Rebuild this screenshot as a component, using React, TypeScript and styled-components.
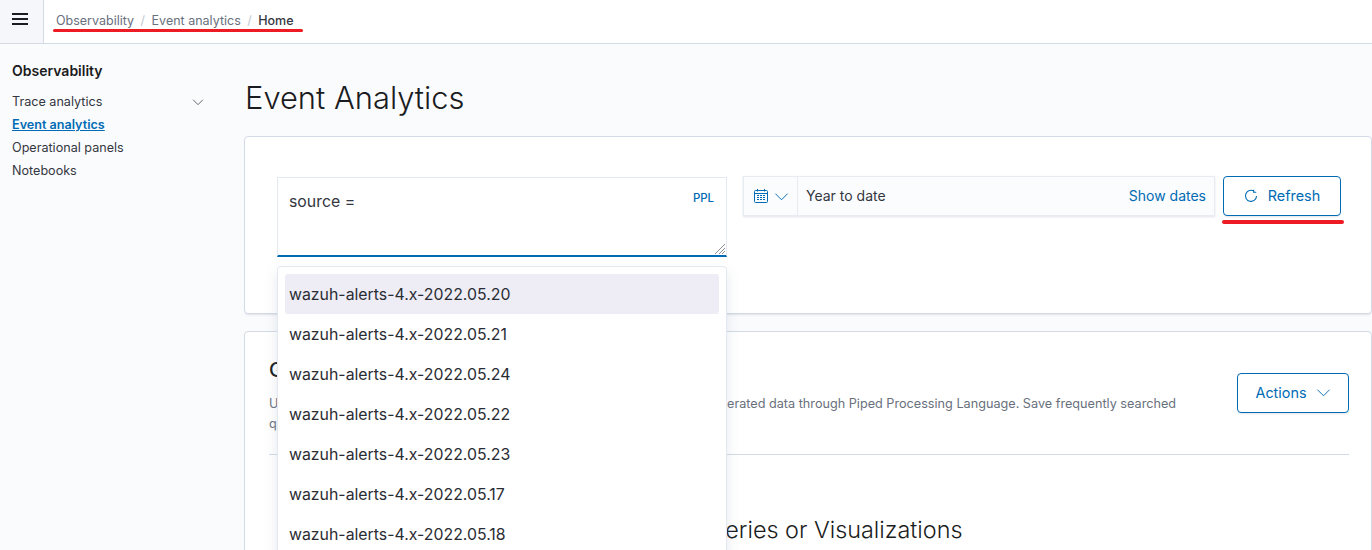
import React from 'react';
import styled, { createGlobalStyle } from 'styled-components';

const GlobalStyle = createGlobalStyle`
  html, body {
    margin: 0;
    padding: 0;
    height: 550px;
    overflow: hidden;
    background: #f5f7fa;
  }
  * { box-sizing: border-box; }
`;

const Page = styled.div`
  position: relative;
  width: 1372px;
  height: 550px;
  overflow: hidden;
  font-family: Inter, 'Liberation Sans', sans-serif;
  color: #343741;
  background: #fafbfd;
`;

const Header = styled.header`
  display: flex;
  align-items: stretch;
  height: 44px;
  background: #fff;
  border-bottom: 1px solid #d3dae6;
`;

const MenuButton = styled.div`
  display: flex;
  align-items: center;
  justify-content: center;
  width: 44px;
  background: #f5f7fa;
  border-right: 1px solid #d3dae6;
  padding: 0 4px 5px 0;
`;

const Breadcrumbs = styled.nav`
  display: flex;
  align-items: center;
  padding: 0 0 2px 12px;
  font-size: 12.5px;
  color: #69707d;
`;

const Crumb = styled.span<{ $current?: boolean }>`
  color: ${(p) => (p.$current ? '#343741' : '#69707d')};
  font-weight: ${(p) => (p.$current ? 500 : 400)};
`;

const CrumbSlash = styled.span`
  margin: 0 6.5px;
  color: #c2c7d0;
`;

const Body = styled.div`
  display: flex;
  height: 506px;
`;

const Sidebar = styled.aside`
  flex: 0 0 244px;
  padding: 19px 0 0 12px;
`;

const SideTitle = styled.div`
  font-size: 14px;
  font-weight: 600;
  line-height: 16px;
  color: #1a1c21;
  margin-bottom: 11px;
`;

const SideItem = styled.div<{ $active?: boolean }>`
  display: flex;
  align-items: center;
  justify-content: space-between;
  width: 192px;
  height: 23px;
  font-size: 12.6px;
  color: ${(p) => (p.$active ? '#006bb4' : '#343741')};
  font-weight: ${(p) => (p.$active ? 600 : 400)};
  text-decoration: ${(p) => (p.$active ? 'underline' : 'none')};
`;

const Main = styled.main`
  flex: 1;
  min-width: 0;
`;

const PageTitle = styled.h1`
  margin: 0;
  height: 92px;
  padding: 34px 0 0 1px;
  font-size: 30.9px;
  line-height: 40px;
  font-weight: 300;
  color: #1a1c21;
`;

const Panel = styled.section`
  background: #fff;
  border: 1px solid #d3dae6;
  border-radius: 4px;
  box-shadow: 0 2px 2px -1px rgba(152, 162, 179, 0.3);
`;

const SearchPanel = styled(Panel)`
  display: flex;
  align-items: flex-start;
  height: 178px;
  padding: 39px 0 0 32px;
  margin-bottom: 17px;
`;

const QueryBox = styled.div`
  display: flex;
  justify-content: space-between;
  width: 450px;
  height: 80px;
  margin-top: 1px;
  padding: 14px 12px 0 11px;
  background: #fff;
  border: 1px solid #e4e8f0;
  border-bottom: 2px solid #006bb4;
  font-size: 15.85px;
  color: #343741;
  position: relative;
`;

const PplTag = styled.span`
  font-size: 11.4px;
  line-height: 12px;
  font-weight: 500;
  color: #006bb4;
`;

const ResizeGrip = styled.svg`
  position: absolute;
  right: 0;
  bottom: 0;
`;

const DateBar = styled.div`
  display: flex;
  align-items: center;
  width: 472px;
  height: 40px;
  margin-left: 16px;
  background: #fbfcfd;
  border: 1px solid #e7ebf2;
  box-shadow: 0 1px 2px rgba(152, 162, 179, 0.3);
  font-size: 14px;
`;

const DatePicker = styled.div`
  display: flex;
  align-items: center;
  justify-content: center;
  gap: 5px;
  width: 54px;
  height: 100%;
  border-right: 1px solid #e7ebf2;
`;

const DateRange = styled.div`
  flex: 1;
  display: flex;
  justify-content: space-between;
  padding: 0 8px 1px;
`;

const DateLink = styled.span`
  display: flex;
  color: #006bb4;
`;

const OutlineButton = styled.div<{ $width: number }>`
  display: flex;
  align-items: center;
  justify-content: center;
  gap: 9px;
  width: ${(p) => p.$width}px;
  height: 40px;
  flex: none;
  padding-bottom: 1px;
  border: 1px solid #006bb4;
  border-radius: 4px;
  background: #fff;
  box-shadow: 0 2px 2px -1px rgba(152, 162, 179, 0.3);
  font-size: 14.4px;
  color: #006bb4;
`;

const RefreshButton = styled(OutlineButton)`
  margin-left: 8px;
  gap: 10px;
`;

const ActionsButton = styled(OutlineButton)`
  margin-top: 15px;
`;

const ContentPanel = styled(Panel)`
  height: 260px;
  padding: 26px 22px 0 24px;
`;

const PanelHead = styled.div`
  display: flex;
  justify-content: space-between;
  align-items: flex-start;
  height: 97px;
  border-bottom: 1px solid #d3dae6;
`;

const HeadText = styled.div`
  width: 925px;
`;

const PanelTitle = styled.h3`
  margin: 0 0 12px;
  font-size: 20px;
  line-height: 24px;
  font-weight: 500;
  color: #1a1c21;
`;

const PanelDesc = styled.p`
  margin: 0;
  font-size: 12.67px;
  line-height: 20px;
  color: #69707d;
`;

const EmptyTitle = styled.h2`
  margin: 0;
  padding-top: 60px;
  text-align: center;
  font-size: 23.4px;
  line-height: 30px;
  font-weight: 300;
  color: #1a1c21;
`;

const Dropdown = styled.ul`
  position: absolute;
  left: 277px;
  top: 266px;
  width: 450px;
  height: 300px;
  margin: 0;
  padding: 7px 7px 0;
  list-style: none;
  background: #fff;
  border: 1px solid #e4e8f0;
  border-radius: 4px;
  box-shadow: 0 6px 12px rgba(152, 162, 179, 0.25);
`;

const DropdownItem = styled.li<{ $selected?: boolean }>`
  display: flex;
  align-items: center;
  height: 40px;
  padding-left: 4px;
  border-radius: 3px;
  font-size: 15.85px;
  color: #2a2c33;
  background: ${(p) => (p.$selected ? '#eeedf6' : 'transparent')};
`;

const RedMark = styled.div<{ $left: number; $top: number; $width: number }>`
  position: absolute;
  left: ${(p) => p.$left}px;
  top: ${(p) => p.$top}px;
  width: ${(p) => p.$width}px;
  height: 3.6px;
  border-radius: 2px;
  background: #ed1c24;
`;

const Chevron = ({ size = 16 }: { size?: number }) => (
  <svg width={size} height={size} viewBox="0 0 16 16" fill="none">
    <path d="M1.5 5 8 11.5 14.5 5" stroke="currentColor" strokeWidth="1" />
  </svg>
);

const indices = ['20', '21', '24', '22', '23', '17', '18'];

export default function App() {
  return (
    <Page>
      <GlobalStyle />
      <Header>
        <MenuButton>
          <svg width="16" height="12" viewBox="0 0 16 12">
            <path d="M0 1h16M0 6h16M0 11h16" stroke="#1a1c21" strokeWidth="2" />
          </svg>
        </MenuButton>
        <Breadcrumbs>
          <Crumb>Observability</Crumb>
          <CrumbSlash>/</CrumbSlash>
          <Crumb>Event analytics</Crumb>
          <CrumbSlash>/</CrumbSlash>
          <Crumb $current>Home</Crumb>
        </Breadcrumbs>
      </Header>
      <Body>
        <Sidebar>
          <SideTitle>Observability</SideTitle>
          <SideItem>
            Trace analytics
            <Chevron size={12} />
          </SideItem>
          <SideItem $active>Event analytics</SideItem>
          <SideItem>Operational panels</SideItem>
          <SideItem>Notebooks</SideItem>
        </Sidebar>
        <Main>
          <PageTitle>Event Analytics</PageTitle>
          <SearchPanel>
            <QueryBox>
              source =
              <PplTag>PPL</PplTag>
              <ResizeGrip width="12" height="12" viewBox="0 0 12 12">
                <path d="M1 11 11 1M5 11l6-6M8 11l3-3" stroke="#8a8f99" strokeWidth="1" />
              </ResizeGrip>
            </QueryBox>
            <DateBar>
              <DatePicker>
                <svg width="16" height="16" viewBox="0 0 16 16" fill="none" stroke="#006bb4">
                  <rect x="1.5" y="2.5" width="13" height="12" rx="1" />
                  <path d="M1.5 5.5h13M4.5 1v2.5M11.5 1v2.5" />
                  <path d="M4 7.5h8M4 9.5h8M4 11.5h8" strokeDasharray="2 1" />
                </svg>
                <DateLink>
                  <Chevron size={15} />
                </DateLink>
              </DatePicker>
              <DateRange>
                Year to date
                <DateLink>Show dates</DateLink>
              </DateRange>
            </DateBar>
            <RefreshButton $width={118}>
              <svg width="14" height="14" viewBox="0 0 16 16" fill="none" stroke="currentColor" strokeWidth="1.2">
                <path d="M11.5 2.6A6.3 6.3 0 1 0 14.3 8" />
                <path d="M11 0.8v3h3" />
              </svg>
              Refresh
            </RefreshButton>
          </SearchPanel>
          <ContentPanel>
            <PanelHead>
              <HeadText>
                <PanelTitle>Get started</PanelTitle>
                <PanelDesc>
                  Use Event Analytics to monitor, correlate, analyze and visualize machine generated data through Piped Processing Language. Save frequently searched queries and visualizations.
                </PanelDesc>
              </HeadText>
              <ActionsButton $width={112}>
                Actions
                <Chevron size={15} />
              </ActionsButton>
            </PanelHead>
            <EmptyTitle>No Queries or Visualizations</EmptyTitle>
          </ContentPanel>
        </Main>
      </Body>
      <Dropdown>
        {indices.map((day, i) => (
          <DropdownItem key={day} $selected={i === 0}>
            wazuh-alerts-4.x-2022.05.{day}
          </DropdownItem>
        ))}
      </Dropdown>
      <RedMark $left={53} $top={28.7} $width={250} />
      <RedMark $left={1222} $top={220} $width={122} />
    </Page>
  );
}
